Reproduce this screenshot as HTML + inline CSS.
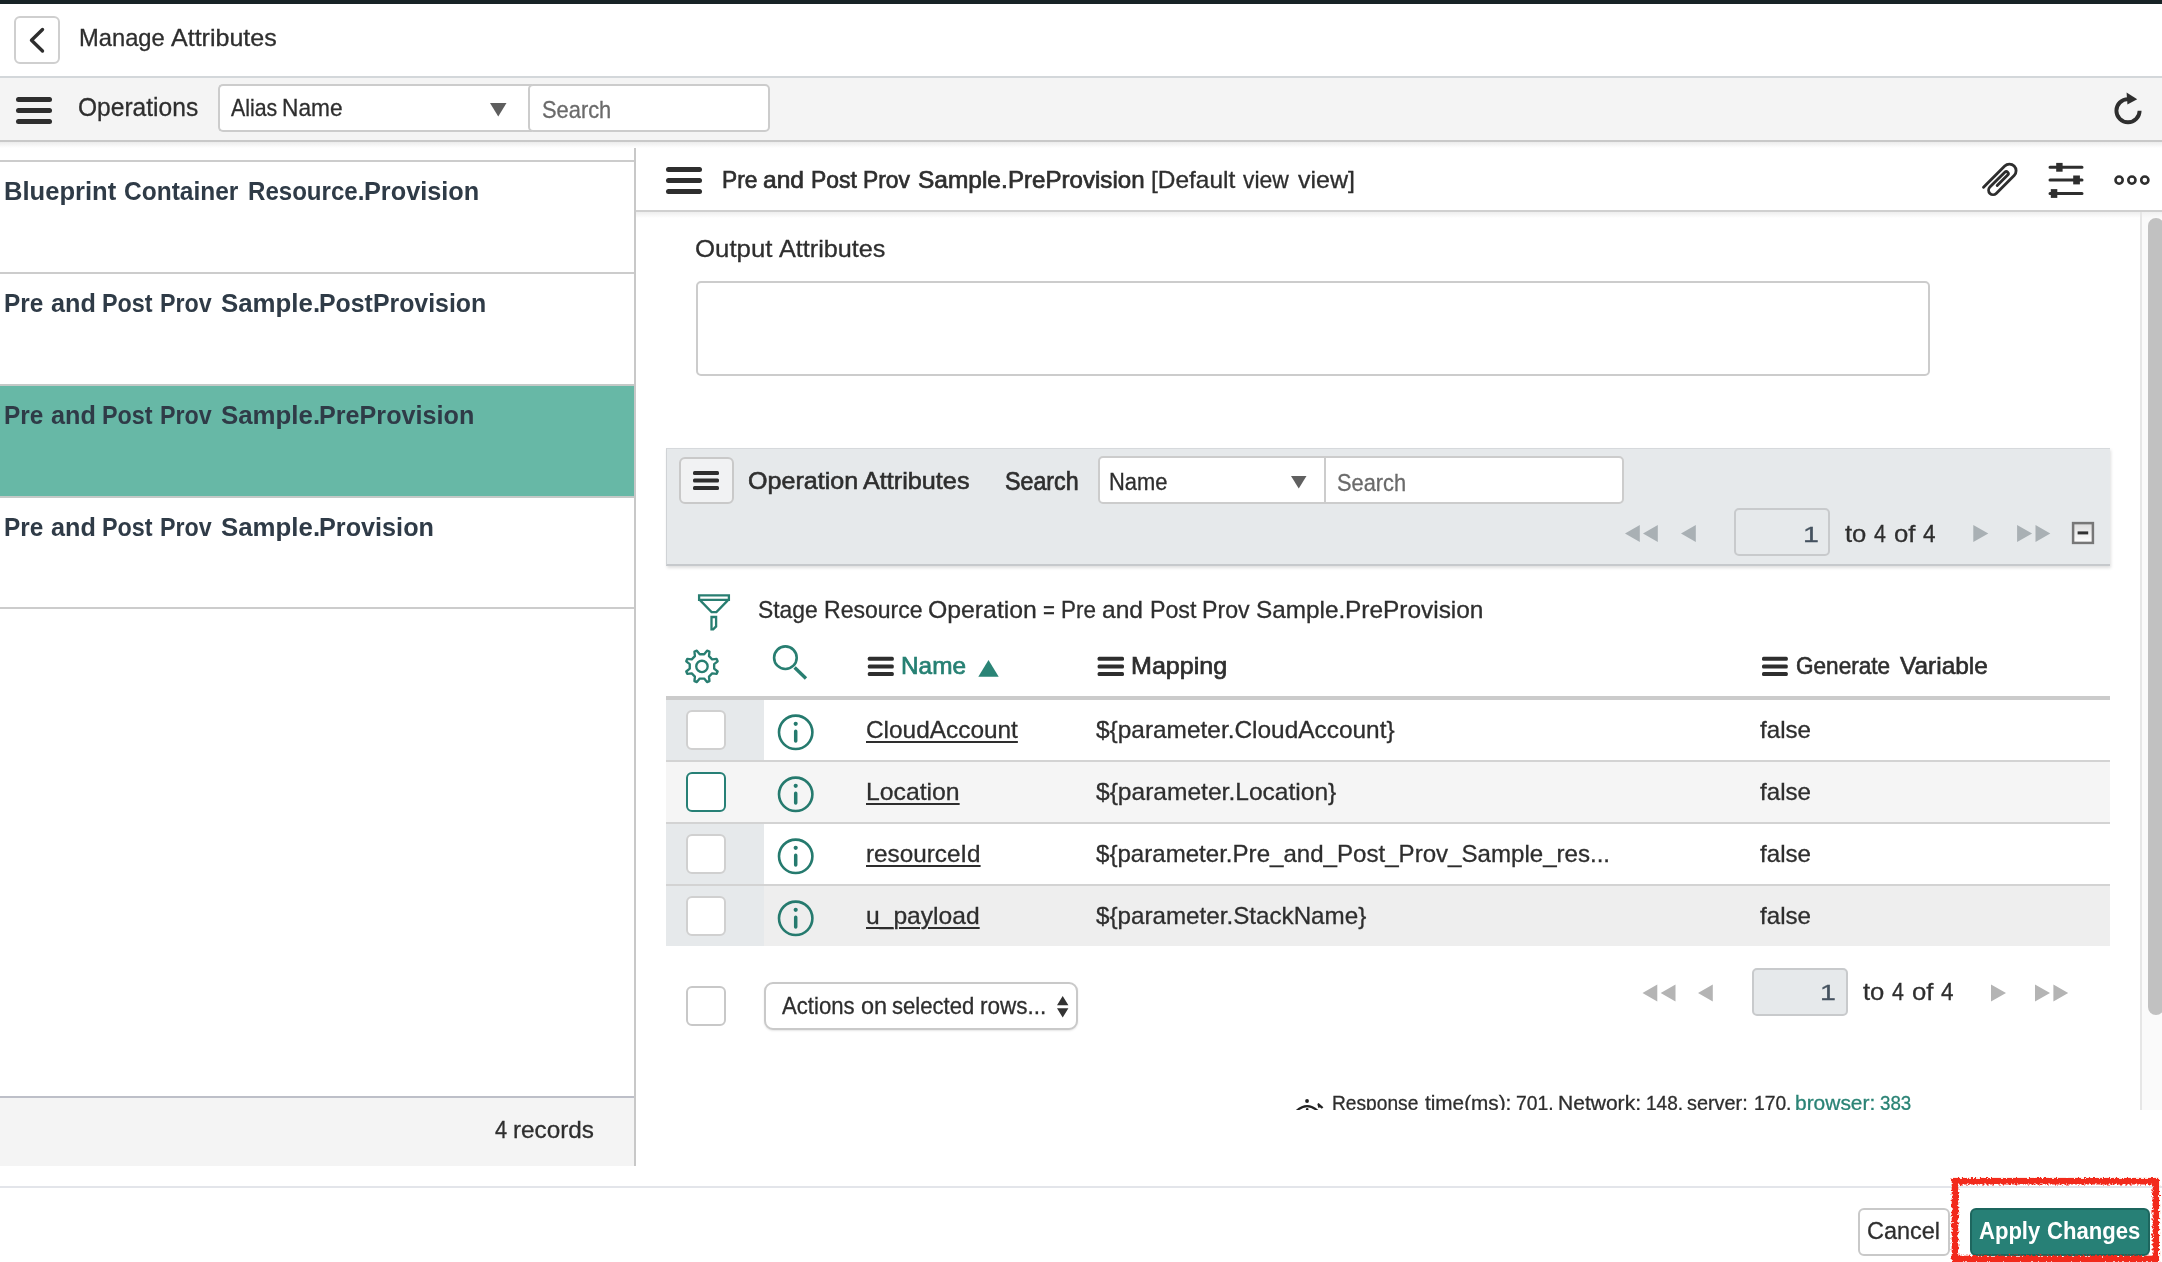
<!DOCTYPE html>
<html><head><meta charset="utf-8"><title>Manage Attributes</title>
<style>
*{box-sizing:border-box;margin:0;padding:0}
html,body{width:2162px;height:1262px;overflow:hidden;background:#fff}
body{position:relative;font-family:"Liberation Sans",sans-serif;color:#2e2e2e}
.a{position:absolute}
.t{position:absolute;white-space:nowrap;line-height:1;transform-origin:0 0;-webkit-text-stroke:0.3px currentColor}
.box{position:absolute;background:#fff;border:2px solid #ccc;border-radius:5px}
svg{position:absolute;overflow:visible}
.ln{position:absolute;background:#ccc}
</style></head><body>
<!-- top dark bar -->
<div class="a" style="left:0;top:0;width:2162px;height:4px;background:#182326"></div>
<!-- back button -->
<div class="box" style="left:14px;top:16px;width:46px;height:48px;border-width:2px;border-color:#cfcfcf;border-radius:6px"></div>
<svg style="left:14px;top:16px" width="46" height="48"><path d="M28.5 13.5 L17.5 24.3 L28.5 35" fill="none" stroke="#2e2e2e" stroke-width="3.4" stroke-linecap="round" stroke-linejoin="round"/></svg>
<!-- header border + toolbar -->
<div class="a" style="left:0;top:76px;width:2162px;height:2px;background:#d3d7da"></div>
<div class="a" style="left:0;top:78px;width:2162px;height:62px;background:#f4f4f4"></div>
<div class="a" style="left:0;top:140px;width:2162px;height:2px;background:#c9c9c9"></div>
<div class="a" style="left:0;top:142px;width:2162px;height:6px;background:linear-gradient(#ececec,#fff)"></div>
<!-- toolbar hamburger -->
<svg style="left:16px;top:97px" width="36" height="27"><g fill="#2e2e2e"><rect x="0" y="0" width="36" height="5" rx="2.5"/><rect x="0" y="11" width="36" height="5" rx="2.5"/><rect x="0" y="22" width="36" height="5" rx="2.5"/></g></svg>
<!-- toolbar select + search -->
<div class="box" style="left:218px;top:84px;width:314px;height:48px;border-radius:5px 0 0 5px;border-right:none"></div>
<svg style="left:490px;top:103px" width="17" height="14"><path d="M0 0H16.5L8.25 13.5Z" fill="#5e5e5e"/></svg>
<div class="box" style="left:528px;top:84px;width:242px;height:48px;border-radius:5px"></div>
<svg style="left:0;top:0" width="2162" height="150"><g fill="none" stroke="#2e2e2e" stroke-width="3.9"><path d="M2139.6 110.7 A11.6 11.6 0 1 1 2128 99.1"/></g><path d="M2126.6 92.6 L2137.2 99.2 L2127.4 104.4Z" fill="#2e2e2e"/></svg>
<!-- left panel -->
<div class="ln" style="left:634px;top:148px;width:2px;height:1018px;background:#c8c8c8"></div>
<div class="ln" style="left:0;top:160px;width:634px;height:2px"></div>
<div class="ln" style="left:0;top:272px;width:634px;height:2px"></div>
<div class="a" style="left:0;top:385px;width:634px;height:111px;background:#67b8a6"></div>
<div class="ln" style="left:0;top:384px;width:634px;height:2px;background:#c4c9c7"></div>
<div class="ln" style="left:0;top:496px;width:634px;height:2px;background:#c4c9c7"></div>
<div class="ln" style="left:0;top:607px;width:634px;height:2px"></div>
<div class="a" style="left:0;top:1097px;width:634px;height:69px;background:#f4f4f4"></div>
<div class="ln" style="left:0;top:1096px;width:634px;height:2px;background:#bdbfc8"></div>
<!-- bottom bar line -->
<div class="a" style="left:0;top:1186px;width:2162px;height:2px;background:#e3e5ea"></div>
<!-- right panel header -->
<svg style="left:666px;top:167px" width="36" height="27"><g fill="#2e2e2e"><rect x="0" y="0" width="36" height="5" rx="2.5"/><rect x="0" y="11" width="36" height="5" rx="2.5"/><rect x="0" y="22" width="36" height="5" rx="2.5"/></g></svg>
<div class="a" style="left:636px;top:210px;width:1526px;height:2px;background:#d0d0d0"></div>
<div class="a" style="left:636px;top:212px;width:1526px;height:6px;background:linear-gradient(#eeeeee,#fff)"></div>
<svg style="left:0;top:0" width="2162" height="210">
<g transform="translate(2000.1 180.1) rotate(45)" fill="none" stroke="#2e2e2e" stroke-width="2.85" stroke-linecap="round" stroke-linejoin="round"><path d="M-6.65 16.8 L-6.65 -13.2 A6.65 6.65 0 0 1 6.65 -13.2 L6.65 12.15 A4.45 4.45 0 0 1 -2.25 12.15 L-2.25 -8.9 A2.02 2.02 0 0 1 1.8 -8.9 L1.8 5.9"/></g>
<g stroke="#2e2e2e" stroke-width="3" stroke-linecap="round"><path d="M2050 167.3H2082 M2050 179.9H2082 M2050 193.4H2082"/></g>
<g fill="#2e2e2e"><rect x="2056.2" y="162.9" width="6.4" height="8.8"/><rect x="2073.2" y="175.5" width="6.7" height="8.9"/><rect x="2050.8" y="189.1" width="6.5" height="8.8"/></g>
<g fill="none" stroke="#2e2e2e" stroke-width="2.6"><circle cx="2119.1" cy="180.1" r="3.6"/><circle cx="2131.9" cy="180.1" r="3.6"/><circle cx="2144.8" cy="180.1" r="3.6"/></g>
</svg>
<!-- scrollbar -->
<div class="a" style="left:2140px;top:212px;width:22px;height:898px;background:linear-gradient(#f0f0f0,#fafafa 6px);border-left:2px solid #e6e6e6"></div>
<div class="a" style="left:2148px;top:218px;width:16px;height:797px;background:#c1c1c1;border-radius:8px"></div>
<!-- textarea -->
<div class="box" style="left:696px;top:281px;width:1234px;height:95px;border-radius:5px"></div>
<!-- list header panel -->
<div class="a" style="left:666px;top:448px;width:1444px;height:118px;background:#e6e9eb;border-top:1px solid #d6d9dc;border-bottom:2px solid #c6c9cc;border-left:1px solid #d0d3d6;box-shadow:1px 2px 3px rgba(0,0,0,.13)"></div>
<div class="box" style="left:678.5px;top:456.5px;width:55px;height:47px;background:#f1f2f3;border-color:#c9c9c9;border-radius:6px"></div>
<svg style="left:693px;top:471px" width="26" height="19"><g fill="#2e2e2e"><rect x="0" y="0" width="26" height="4" rx="1.5"/><rect x="0" y="7.5" width="26" height="4" rx="1.5"/><rect x="0" y="15" width="26" height="4" rx="1.5"/></g></svg>
<div class="box" style="left:1098px;top:456px;width:228px;height:48px;border-radius:5px 0 0 5px"></div>
<svg style="left:1291px;top:476px" width="16" height="13"><path d="M0 0H15.5L7.75 12.5Z" fill="#606060"/></svg>
<div class="box" style="left:1324px;top:456px;width:300px;height:48px;border-radius:0 5px 5px 0"></div>
<!-- pagination top -->
<div class="box" style="left:1734px;top:508px;width:96px;height:48px;background:#e6e9eb;border-color:#c8cacc;border-radius:5px"></div>
<svg style="left:0;top:0" width="2162" height="700">
<g fill="#a9b0b4"><path d="M1625 533.5L1639.8 525V542Z M1643 533.5L1657.8 525V542Z M1681 533.5L1695.8 525V542Z M1988.3 533.5L1973.3 525V542Z M2032.1 533.5L2017.1 525V542Z M2050.3 533.5L2035.5 525V542Z"/></g>
<defs><linearGradient id="cg" x1="0" y1="0" x2="0" y2="1"><stop offset="0" stop-color="#dcdcdc"/><stop offset="1" stop-color="#ffffff"/></linearGradient></defs>
<rect x="2073.1" y="523.1" width="19.8" height="19.8" fill="url(#cg)" stroke="#777" stroke-width="2.5"/>
<rect x="2077.6" y="531.4" width="10.6" height="3" fill="#333"/>
<!-- funnel -->
<g fill="none" stroke="#287e71" stroke-width="2.3" stroke-linejoin="miter"><path d="M699.1 595.3H728.9V599.9H699.1Z"/><path d="M700.2 600.4L711.6 612.1H716.4L727.8 600.4"/><path d="M711.5 617H716.1V626.4L713.2 629.3H711.5Z"/></g>
<!-- gear -->
<g fill="none" stroke="#287e71" stroke-width="2.35" stroke-linejoin="round"><path d="M714.15 668.63 L717.64 671.50 L716.65 673.89 L712.15 673.45 L709.00 676.60 L709.44 681.10 L707.05 682.09 L704.18 678.60 L699.72 678.60 L696.85 682.09 L694.46 681.10 L694.90 676.60 L691.75 673.45 L687.25 673.89 L686.26 671.50 L689.75 668.63 L689.75 664.17 L686.26 661.30 L687.25 658.91 L691.75 659.35 L694.90 656.20 L694.46 651.70 L696.85 650.71 L699.72 654.20 L704.18 654.20 L707.05 650.71 L709.44 651.70 L709.00 656.20 L712.15 659.35 L716.65 658.91 L717.64 661.30 L714.15 664.17Z"/><circle cx="701.95" cy="666.4" r="5.7"/></g>
<!-- magnifier -->
<g fill="none" stroke="#287e71"><circle cx="785.4" cy="657.7" r="11.3" stroke-width="2.6"/><path d="M794.6 667.6L806 678.4" stroke-width="3.4"/></g>
<!-- column hamburgers -->
<g fill="#2e2e2e"><rect x="867.8" y="656.7" width="26" height="4" rx="1.5"/><rect x="867.8" y="664.4" width="26" height="4" rx="1.5"/><rect x="867.8" y="672.1" width="26" height="4" rx="1.5"/>
<rect x="1097.6" y="656.7" width="26.4" height="4" rx="1.5"/><rect x="1097.6" y="664.4" width="26.4" height="4" rx="1.5"/><rect x="1097.6" y="672.1" width="26.4" height="4" rx="1.5"/>
<rect x="1762" y="656.7" width="25.8" height="4" rx="1.5"/><rect x="1762" y="664.4" width="25.8" height="4" rx="1.5"/><rect x="1762" y="672.1" width="25.8" height="4" rx="1.5"/></g>
<path d="M978.3 676.7L988.5 660L998.7 676.7Z" fill="#2a8476"/>
</svg>
<!-- table header border -->
<div class="a" style="left:666px;top:696px;width:1444px;height:4px;background:#cbcbcb"></div>
<!-- rows -->
<div class="a" style="left:666px;top:700px;width:98px;height:61px;background:#e6e9eb"></div>
<div class="a" style="left:666px;top:761px;width:1444px;height:62px;background:#f5f5f5"></div>
<div class="a" style="left:666px;top:823px;width:98px;height:62px;background:#e6e9eb"></div>
<div class="a" style="left:666px;top:885px;width:1444px;height:61px;background:#eeeeee"></div>
<div class="a" style="left:666px;top:885px;width:98px;height:61px;background:#e6e9eb"></div>
<div class="ln" style="left:666px;top:760px;width:1444px;height:2px;background:#d3d3d3"></div>
<div class="ln" style="left:666px;top:822px;width:1444px;height:2px;background:#d3d3d3"></div>
<div class="ln" style="left:666px;top:884px;width:1444px;height:2px;background:#d3d3d3"></div>
<!-- checkboxes -->
<div class="box" style="left:686px;top:710px;width:40px;height:40px;border-color:#d0d0d0;border-radius:6px"></div>
<div class="box" style="left:686px;top:772px;width:40px;height:40px;border-color:#278076;border-radius:6px"></div>
<div class="box" style="left:686px;top:834px;width:40px;height:40px;border-color:#d0d0d0;border-radius:6px"></div>
<div class="box" style="left:686px;top:896px;width:40px;height:40px;border-color:#d0d0d0;border-radius:6px"></div>
<div class="box" style="left:686px;top:986px;width:40px;height:40px;border-color:#c8c8c8;border-radius:6px"></div>
<svg style="left:0;top:0" width="2162" height="960"><g fill="none" stroke="#257a6e" stroke-width="2.6"><circle cx="795.7" cy="732.3" r="16.7"/><circle cx="795.7" cy="794.3" r="16.7"/><circle cx="795.7" cy="856.3" r="16.7"/><circle cx="795.7" cy="918.3" r="16.7"/></g>
<g stroke="#257a6e" stroke-width="3.5" stroke-linecap="round"><path d="M795.7 731.3V741 M795.7 793.3V803 M795.7 855.3V865 M795.7 917.3V927"/></g>
<g fill="#257a6e"><circle cx="795.7" cy="723.8" r="2.1"/><circle cx="795.7" cy="785.8" r="2.1"/><circle cx="795.7" cy="847.8" r="2.1"/><circle cx="795.7" cy="909.8" r="2.1"/></g></svg>
<!-- bottom select -->
<div class="box" style="left:764px;top:982px;width:314px;height:48px;border-color:#c9c9c9;border-radius:9px;box-shadow:0 1px 2px rgba(0,0,0,.10)"></div>
<svg style="left:1056.9px;top:995.6px" width="12" height="22"><path d="M5.7 0L11.4 9.2H0Z M5.7 21.4L11.4 12.2H0Z" fill="#333"/></svg>
<!-- bottom pager -->
<div class="box" style="left:1752px;top:968px;width:96px;height:48px;background:#e6e9eb;border-color:#c8cacc;border-radius:5px"></div>
<svg style="left:0;top:0" width="2162" height="1110">
<g fill="#b4b4b4"><path d="M1642.5 993L1657.3 984.5V1001.5Z M1660.7 993L1675.5 984.5V1001.5Z M1698 993L1712.8 984.5V1001.5Z M2006 993L1991 984.5V1001.5Z M2050 993L2035 984.5V1001.5Z M2068.2 993L2053.4 984.5V1001.5Z"/></g>
</svg>
<div class="a" style="left:1280px;top:1080px;width:700px;height:29.8px;overflow:hidden">
<svg style="left:0;top:0" width="60" height="40"><path d="M16.6 30.8 Q27.2 21.3 37.6 30.8" fill="none" stroke="#222" stroke-width="2.2"/><ellipse cx="27.05" cy="21" rx="1.9" ry="2.05" fill="#222"/><circle cx="27.2" cy="29.3" r="1.3" fill="#222"/><path d="M38.6 22.9L43.4 27.3L41.8 28.7L39.9 27.2L38.6 28.3L37.6 25.2L37.4 23.9Z" fill="#222"/></svg>
<div class="t" style="left:52.2px;top:13.0px;font-size:20.5px;transform:scaleX(0.9347)">Response</div>
<div class="t" style="left:145.2px;top:13.0px;font-size:20.5px;transform:scaleX(1.0106)">time(ms):</div>
<div class="t" style="left:235.7px;top:13.0px;font-size:20.5px;transform:scaleX(0.9423)">701.</div>
<div class="t" style="left:277.8px;top:13.0px;font-size:20.5px;transform:scaleX(1.0261)">Network:</div>
<div class="t" style="left:365.8px;top:13.0px;font-size:20.5px;transform:scaleX(0.9280)">148.</div>
<div class="t" style="left:407.2px;top:13.0px;font-size:20.5px;transform:scaleX(0.9683)">server:</div>
<div class="t" style="left:473.6px;top:13.0px;font-size:20.5px;transform:scaleX(0.9387)">170.</div>
<div class="t" style="left:515.4px;top:13.0px;font-size:20.5px;color:#2a8375;transform:scaleX(1.0216)">browser:</div>
<div class="t" style="left:599.7px;top:13.0px;font-size:20.5px;color:#2a8375;transform:scaleX(0.9142)">383</div>
</div>
<!-- footer buttons -->
<div class="box" style="left:1858px;top:1208px;width:92px;height:48px;border-color:#c9c9c9;border-radius:6px"></div>
<div class="box" style="left:1970px;top:1208px;width:180px;height:48px;background:#278076;border-color:#1d665e;border-radius:6px"></div>
<svg style="left:0;top:0" width="2162" height="1262"><defs><filter id="rough" x="-5%" y="-5%" width="110%" height="110%"><feTurbulence type="fractalNoise" baseFrequency="0.45" numOctaves="2" seed="3" result="n"/><feDisplacementMap in="SourceGraphic" in2="n" scale="5"/></filter></defs>
<rect x="1955" y="1181.2" width="200.8" height="77.8" fill="none" stroke="#f22b1e" stroke-width="6.6" filter="url(#rough)"/></svg>
<div class="t" style="left:79.1px;top:26.0px;font-size:24px;transform:scaleX(0.9884)">Manage</div>
<div class="t" style="left:171.2px;top:26.0px;font-size:24px;transform:scaleX(1.0428)">Attributes</div>
<div class="t" style="left:77.7px;top:95.2px;font-size:25px;transform:scaleX(0.9826)">Operations</div>
<div class="t" style="left:230.6px;top:96.0px;font-size:24px;transform:scaleX(0.8896)">Alias</div>
<div class="t" style="left:281.6px;top:96.0px;font-size:24px;transform:scaleX(0.9456)">Name</div>
<div class="t" style="left:541.6px;top:98.0px;font-size:24px;color:#6a6a6a;transform:scaleX(0.9111)">Search</div>
<div class="t" style="left:4.1px;top:178.0px;font-size:26px;font-weight:700;color:#2f3b47;-webkit-text-stroke:0;transform:scaleX(0.9834)">Blueprint</div>
<div class="t" style="left:124.0px;top:178.0px;font-size:26px;font-weight:700;color:#2f3b47;-webkit-text-stroke:0;transform:scaleX(0.9424)">Container</div>
<div class="t" style="left:248.2px;top:178.0px;font-size:26px;font-weight:700;color:#2f3b47;-webkit-text-stroke:0;transform:scaleX(0.9256)">Resource.</div>
<div class="t" style="left:363.7px;top:178.0px;font-size:26px;font-weight:700;color:#2f3b47;-webkit-text-stroke:0;transform:scaleX(0.9728)">Provision</div>
<div class="t" style="left:4.2px;top:290.0px;font-size:26px;font-weight:700;color:#2f3b47;-webkit-text-stroke:0;transform:scaleX(0.9378)">Pre</div>
<div class="t" style="left:51.3px;top:290.0px;font-size:26px;font-weight:700;color:#2f3b47;-webkit-text-stroke:0;transform:scaleX(0.9701)">and</div>
<div class="t" style="left:102.0px;top:290.0px;font-size:26px;font-weight:700;color:#2f3b47;-webkit-text-stroke:0;transform:scaleX(0.8989)">Post</div>
<div class="t" style="left:160.3px;top:290.0px;font-size:26px;font-weight:700;color:#2f3b47;-webkit-text-stroke:0;transform:scaleX(0.8956)">Prov</div>
<div class="t" style="left:221.2px;top:290.0px;font-size:26px;font-weight:700;color:#2f3b47;-webkit-text-stroke:0;transform:scaleX(0.9939)">Sample.</div>
<div class="t" style="left:318.6px;top:290.0px;font-size:26px;font-weight:700;color:#2f3b47;-webkit-text-stroke:0;transform:scaleX(0.9567)">PostProvision</div>
<div class="t" style="left:4.2px;top:402.0px;font-size:26px;font-weight:700;color:#2f3b47;-webkit-text-stroke:0;transform:scaleX(0.9378)">Pre</div>
<div class="t" style="left:51.3px;top:402.0px;font-size:26px;font-weight:700;color:#2f3b47;-webkit-text-stroke:0;transform:scaleX(0.9701)">and</div>
<div class="t" style="left:102.0px;top:402.0px;font-size:26px;font-weight:700;color:#2f3b47;-webkit-text-stroke:0;transform:scaleX(0.8989)">Post</div>
<div class="t" style="left:160.3px;top:402.0px;font-size:26px;font-weight:700;color:#2f3b47;-webkit-text-stroke:0;transform:scaleX(0.8956)">Prov</div>
<div class="t" style="left:221.2px;top:402.0px;font-size:26px;font-weight:700;color:#2f3b47;-webkit-text-stroke:0;transform:scaleX(0.9939)">Sample.</div>
<div class="t" style="left:318.6px;top:402.0px;font-size:26px;font-weight:700;color:#2f3b47;-webkit-text-stroke:0;transform:scaleX(0.9680)">PreProvision</div>
<div class="t" style="left:4.2px;top:514.0px;font-size:26px;font-weight:700;color:#2f3b47;-webkit-text-stroke:0;transform:scaleX(0.9378)">Pre</div>
<div class="t" style="left:51.3px;top:514.0px;font-size:26px;font-weight:700;color:#2f3b47;-webkit-text-stroke:0;transform:scaleX(0.9701)">and</div>
<div class="t" style="left:102.0px;top:514.0px;font-size:26px;font-weight:700;color:#2f3b47;-webkit-text-stroke:0;transform:scaleX(0.8989)">Post</div>
<div class="t" style="left:160.3px;top:514.0px;font-size:26px;font-weight:700;color:#2f3b47;-webkit-text-stroke:0;transform:scaleX(0.8956)">Prov</div>
<div class="t" style="left:221.2px;top:514.0px;font-size:26px;font-weight:700;color:#2f3b47;-webkit-text-stroke:0;transform:scaleX(0.9939)">Sample.</div>
<div class="t" style="left:318.6px;top:514.0px;font-size:26px;font-weight:700;color:#2f3b47;-webkit-text-stroke:0;transform:scaleX(0.9702)">Provision</div>
<div class="t" style="left:494.7px;top:1118.3px;font-size:24px;transform:scaleX(0.9088)">4</div>
<div class="t" style="left:513.1px;top:1118.3px;font-size:24px;transform:scaleX(1.0115)">records</div>
<div class="t" style="left:721.9px;top:167.9px;font-size:24px;-webkit-text-stroke:0.7px #2e2e2e;transform:scaleX(0.9484)">Pre</div>
<div class="t" style="left:763.4px;top:167.9px;font-size:24px;-webkit-text-stroke:0.7px #2e2e2e;transform:scaleX(1.0248)">and</div>
<div class="t" style="left:810.9px;top:167.9px;font-size:24px;-webkit-text-stroke:0.7px #2e2e2e;transform:scaleX(0.9537)">Post</div>
<div class="t" style="left:862.8px;top:167.9px;font-size:24px;-webkit-text-stroke:0.7px #2e2e2e;transform:scaleX(0.9523)">Prov</div>
<div class="t" style="left:917.5px;top:167.9px;font-size:24px;-webkit-text-stroke:0.7px #2e2e2e;transform:scaleX(1.0196)">Sample.</div>
<div class="t" style="left:1007.8px;top:167.9px;font-size:24px;-webkit-text-stroke:0.7px #2e2e2e;transform:scaleX(1.0036)">PreProvision</div>
<div class="t" style="left:1150.7px;top:167.9px;font-size:24px;transform:scaleX(1.0185)">[Default</div>
<div class="t" style="left:1243.1px;top:167.9px;font-size:24px;transform:scaleX(0.9543)">view</div>
<div class="t" style="left:1297.9px;top:167.9px;font-size:24px;transform:scaleX(1.0418)">view]</div>
<div class="t" style="left:695.3px;top:237.1px;font-size:24px;transform:scaleX(1.0740)">Output</div>
<div class="t" style="left:778.9px;top:237.1px;font-size:24px;transform:scaleX(1.0497)">Attributes</div>
<div class="t" style="left:747.5px;top:468.5px;font-size:24.5px;-webkit-text-stroke:0.6px #2e2e2e;transform:scaleX(1.0239)">Operation</div>
<div class="t" style="left:862.8px;top:468.5px;font-size:24.5px;-webkit-text-stroke:0.6px #2e2e2e;transform:scaleX(1.0291)">Attributes</div>
<div class="t" style="left:1004.7px;top:469.2px;font-size:25.5px;-webkit-text-stroke:0.7px #2e2e2e;transform:scaleX(0.9108)">Search</div>
<div class="t" style="left:1109.2px;top:470.8px;font-size:23px;transform:scaleX(0.9526)">Name</div>
<div class="t" style="left:1336.8px;top:470.5px;font-size:24px;color:#6a6a6a;transform:scaleX(0.9084)">Search</div>
<div class="t" style="left:1802.7px;top:524.0px;font-size:22px;color:#45525f;transform:scaleX(1.3000)">1</div>
<div class="t" style="left:1845.0px;top:522.0px;font-size:24px;transform:scaleX(1.0677)">to</div>
<div class="t" style="left:1874.1px;top:522.0px;font-size:24px;transform:scaleX(0.8935)">4</div>
<div class="t" style="left:1893.9px;top:522.0px;font-size:24px;transform:scaleX(1.0685)">of</div>
<div class="t" style="left:1922.7px;top:522.0px;font-size:24px;transform:scaleX(0.9394)">4</div>
<div class="t" style="left:758.0px;top:597.6px;font-size:24px;transform:scaleX(0.9512)">Stage</div>
<div class="t" style="left:823.8px;top:597.6px;font-size:24px;transform:scaleX(0.9594)">Resource</div>
<div class="t" style="left:928.2px;top:597.6px;font-size:24px;transform:scaleX(1.0331)">Operation</div>
<div class="t" style="left:1043.1px;top:597.6px;font-size:24px;transform:scaleX(0.8508)">=</div>
<div class="t" style="left:1061.0px;top:597.6px;font-size:24px;transform:scaleX(0.9337)">Pre</div>
<div class="t" style="left:1102.2px;top:597.6px;font-size:24px;transform:scaleX(1.0253)">and</div>
<div class="t" style="left:1149.7px;top:597.6px;font-size:24px;transform:scaleX(0.9665)">Post</div>
<div class="t" style="left:1201.9px;top:597.6px;font-size:24px;transform:scaleX(0.9653)">Prov</div>
<div class="t" style="left:1256.3px;top:597.6px;font-size:24px;transform:scaleX(1.0134)">Sample.</div>
<div class="t" style="left:1345.2px;top:597.6px;font-size:24px;transform:scaleX(1.0174)">PreProvision</div>
<div class="t" style="left:901.4px;top:653.6px;font-size:24px;color:#268073;-webkit-text-stroke:0.7px #268073;transform:scaleX(1.0147)">Name</div>
<div class="t" style="left:1131.1px;top:653.6px;font-size:24px;-webkit-text-stroke:0.7px #2e2e2e;transform:scaleX(1.0444)">Mapping</div>
<div class="t" style="left:1795.7px;top:654.0px;font-size:24px;-webkit-text-stroke:0.6px #2e2e2e;transform:scaleX(0.9399)">Generate</div>
<div class="t" style="left:1900.0px;top:654.0px;font-size:24px;-webkit-text-stroke:0.6px #2e2e2e;transform:scaleX(1.0189)">Variable</div>
<div class="t" style="left:866.0px;top:718.0px;font-size:24px;text-decoration:underline;text-decoration-thickness:2px;text-underline-offset:3px;transform:scaleX(1.0162)">CloudAccount</div>
<div class="t" style="left:866.0px;top:780.0px;font-size:24px;text-decoration:underline;text-decoration-thickness:2px;text-underline-offset:3px;transform:scaleX(1.0319)">Location</div>
<div class="t" style="left:866.0px;top:842.0px;font-size:24px;text-decoration:underline;text-decoration-thickness:2px;text-underline-offset:3px;transform:scaleX(1.0107)">resourceId</div>
<div class="t" style="left:866.0px;top:904.0px;font-size:24px;text-decoration:underline;text-decoration-thickness:2px;text-underline-offset:3px;transform:scaleX(1.0261)">u_payload</div>
<div class="t" style="left:1096.2px;top:718.0px;font-size:24px;transform:scaleX(1.0174)">${parameter.CloudAccount}</div>
<div class="t" style="left:1096.2px;top:780.0px;font-size:24px;transform:scaleX(1.0232)">${parameter.Location}</div>
<div class="t" style="left:1096.2px;top:842.0px;font-size:24px;transform:scaleX(1.0034)">${parameter.Pre_and_Post_Prov_Sample_res...</div>
<div class="t" style="left:1096.2px;top:904.0px;font-size:24px;transform:scaleX(1.0078)">${parameter.StackName}</div>
<div class="t" style="left:1760.2px;top:718.0px;font-size:24px;transform:scaleX(1.0063)">false</div>
<div class="t" style="left:1760.2px;top:780.0px;font-size:24px;transform:scaleX(1.0063)">false</div>
<div class="t" style="left:1760.2px;top:842.0px;font-size:24px;transform:scaleX(1.0063)">false</div>
<div class="t" style="left:1760.2px;top:904.0px;font-size:24px;transform:scaleX(1.0063)">false</div>
<div class="t" style="left:782.2px;top:993.9px;font-size:24px;transform:scaleX(0.9221)">Actions</div>
<div class="t" style="left:860.7px;top:993.9px;font-size:24px;transform:scaleX(0.9781)">on</div>
<div class="t" style="left:891.8px;top:993.9px;font-size:24px;transform:scaleX(0.9199)">selected</div>
<div class="t" style="left:980.4px;top:993.9px;font-size:24px;transform:scaleX(0.9377)">rows...</div>
<div class="t" style="left:1820.1px;top:982.0px;font-size:22px;color:#45525f;transform:scaleX(1.3000)">1</div>
<div class="t" style="left:1862.8px;top:980.0px;font-size:24px;transform:scaleX(1.0677)">to</div>
<div class="t" style="left:1891.9px;top:980.0px;font-size:24px;transform:scaleX(0.8935)">4</div>
<div class="t" style="left:1911.7px;top:980.0px;font-size:24px;transform:scaleX(1.0685)">of</div>
<div class="t" style="left:1940.5px;top:980.0px;font-size:24px;transform:scaleX(0.9394)">4</div>
<div class="t" style="left:1867.4px;top:1219.4px;font-size:24.3px;transform:scaleX(0.9658)">Cancel</div>
<div class="t" style="left:1979.3px;top:1219.3px;font-size:24px;font-weight:700;color:#fff;-webkit-text-stroke:0;transform:scaleX(0.9187)">Apply</div>
<div class="t" style="left:2047.0px;top:1219.3px;font-size:24px;font-weight:700;color:#fff;-webkit-text-stroke:0;transform:scaleX(0.9205)">Changes</div>
</body></html>
